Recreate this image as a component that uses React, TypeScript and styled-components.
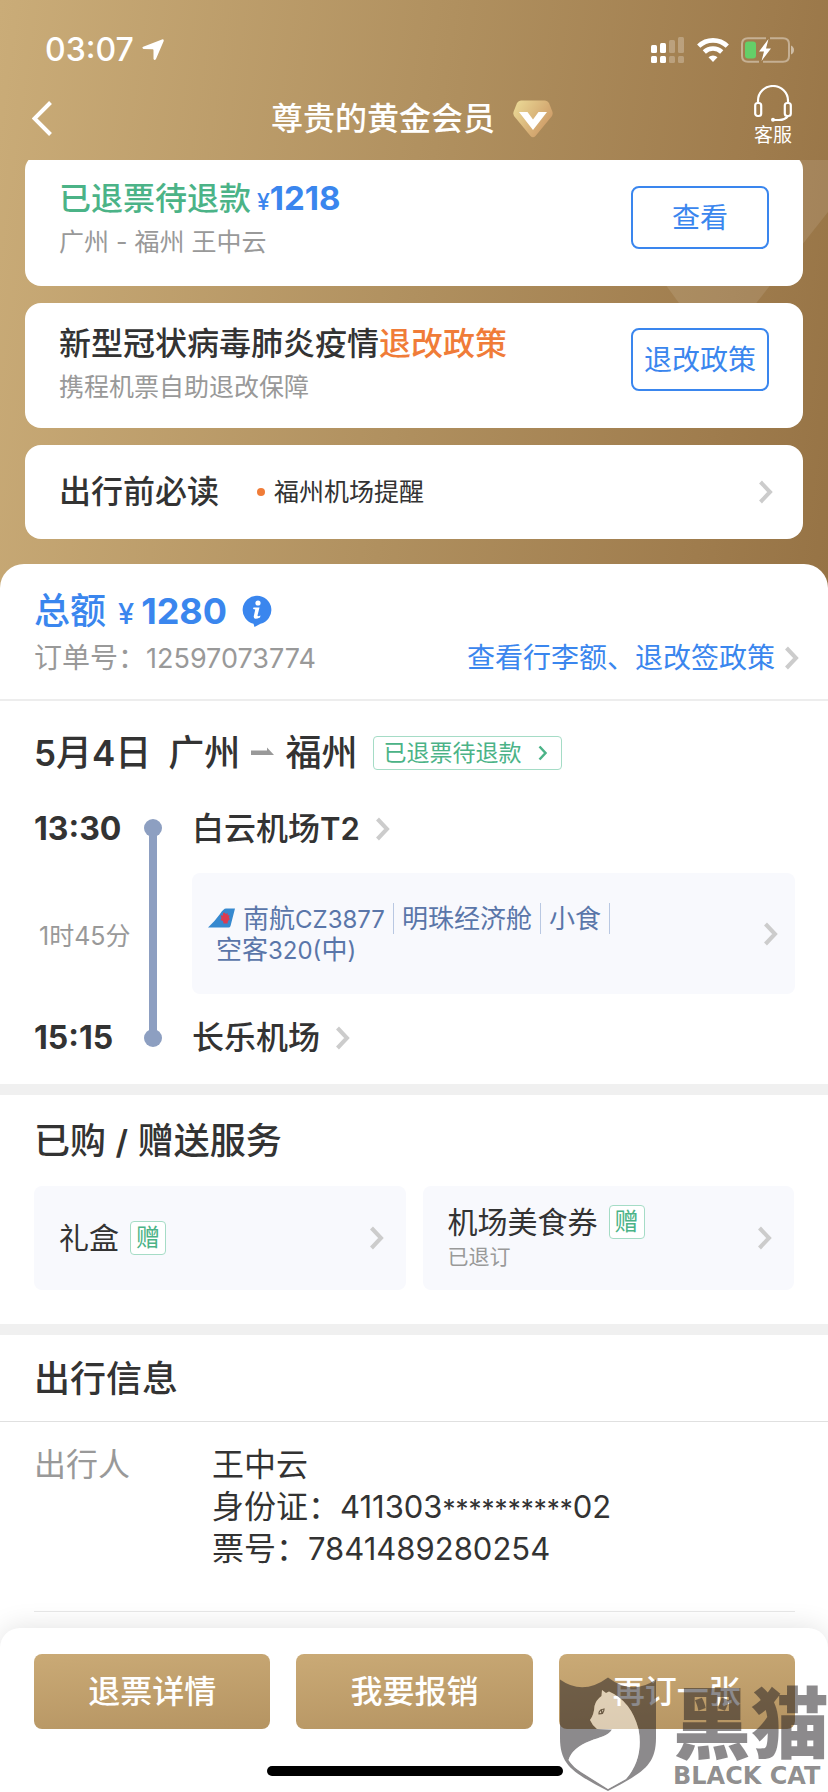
import styled, { createGlobalStyle, css } from 'styled-components';

const GlobalStyle = createGlobalStyle`
  *, *::before, *::after {
    box-sizing: border-box;
  }

  body {
    margin: 0;
    background: #fff;
    color: #333;
    font-family: Inter, 'Noto Sans CJK SC', sans-serif;
  }

  button {
    font-family: inherit;
    cursor: pointer;
  }

  h1, h2, h3, p, dl, dt, dd {
    margin: 0;
    font-weight: inherit;
  }

  b, small {
    line-height: 1;
  }

  svg {
    display: block;
    flex-shrink: 0;
  }
`;

const Page = styled.div`
  position: relative;
  display: flex;
  flex-direction: column;
  min-height: 100vh;
  overflow: hidden;
`;

const Hero = styled.div`
  background: linear-gradient(98deg, #caac78 0%, #b0905f 50%, #9f7c4d 85%, #967345 100%);
  margin-bottom: -26px;
  padding-bottom: 51px;
`;

const StatusBar = styled.div`
  display: flex;
  align-items: center;
  justify-content: space-between;
  height: 80px;
  padding: 20px 34px 0 45px;
  color: #fff;
`;

const Clock = styled.div`
  display: flex;
  align-items: center;
  gap: 8px;
  font-size: 32px;
  font-weight: 500;
  line-height: 40px;
`;

const StatusIcons = styled.div`
  display: flex;
  align-items: center;
  gap: 12px;
`;

const NavBar = styled.header`
  display: grid;
  grid-template-columns: 1fr auto 1fr;
  align-items: center;
  height: 80px;
  padding: 0 36px 2px 32px;
  color: #fff;
`;

const IconButton = styled.button`
  display: flex;
  flex-direction: column;
  align-items: center;
  padding: 0;
  border: 0;
  background: none;
  color: inherit;
  font-size: 19px;
  line-height: 24px;
`;

const BackButton = styled(IconButton)`
  justify-self: start;
`;

const ServiceButton = styled(IconButton)`
  justify-self: end;
  gap: 2px;
  padding-bottom: 6px;
`;

const NavTitle = styled.h1`
  display: flex;
  align-items: center;
  gap: 18px;
  font-size: 32px;
  font-weight: 500;
  line-height: 40px;
`;

const Notices = styled.div`
  position: relative;
  display: flex;
  flex-direction: column;
  gap: 17px;
  padding: 0 25px;
  overflow: hidden;
`;

const Facet = styled.svg`
  position: absolute;
  top: 0;
  right: 0;
`;

const Notice = styled.section<{ $height: number; $scrolled?: boolean; $link?: boolean }>`
  position: relative;
  display: flex;
  align-items: center;
  justify-content: space-between;
  min-height: ${({ $height }) => $height}px;
  margin-top: ${({ $scrolled }) => ($scrolled ? -6 : 0)}px;
  padding: 0 ${({ $link }) => ($link ? 29 : 34)}px 0 34px;
  border-radius: 16px;
  background: #fff;
`;

const NoticeTitle = styled.h2<{ $tone?: string }>`
  color: ${({ $tone }) => $tone ?? '#333'};
  font-size: 32px;
  font-weight: 500;
  line-height: 40px;
`;

const Highlight = styled.span`
  color: #f07c38;
`;

const Price = styled.span`
  margin-left: 6px;
  color: #3a86ee;
  font-size: 33px;
  font-weight: 700;
  line-height: 1;

  small {
    font-size: 23px;
    font-weight: 500;
  }
`;

const Muted = styled.p`
  margin-top: 3px;
  color: #999;
  font-size: 25px;
  line-height: 40px;
`;

const OutlineButton = styled.button`
  align-self: flex-end;
  width: 138px;
  height: 63px;
  margin-bottom: 37px;
  padding: 0 0 4px;
  border: 2px solid #3a86ee;
  border-radius: 8px;
  background: #fff;
  color: #3a86ee;
  font-size: 28px;
`;

const Reminder = styled.p`
  display: flex;
  flex: 1;
  align-items: center;
  gap: 9px;
  margin-left: 38px;
  font-size: 25px;
  line-height: 40px;

  &::before {
    content: '';
    width: 8px;
    height: 8px;
    border-radius: 50%;
    background: #f07c38;
  }
`;

const Sheet = styled.main`
  position: relative;
  flex: 1;
  border-radius: 24px 24px 0 0;
  background: #fff;
`;

const Summary = styled.section`
  height: 137px;
  padding: 24px 28px 0 34px;
  border-bottom: 2px solid #ededed;
`;

const Total = styled.h2`
  display: flex;
  align-items: center;
  color: #3a86ee;
  font-size: 36px;
  font-weight: 500;
  line-height: 46px;
`;

const TotalPrice = styled.span`
  margin: 0 15px 0 12px;
  font-size: 36px;
  font-weight: 700;

  small {
    margin-right: 7px;
    font-size: 29px;
    font-weight: 500;
  }
`;

const SummaryRow = styled.div`
  display: flex;
  align-items: center;
  justify-content: space-between;
  color: #999;
  font-size: 28px;
  line-height: 48px;
`;

const Digits = styled.span<{ $size: number }>`
  font-size: ${({ $size }) => $size}px;
  line-height: 1;
`;

const PolicyLink = styled.a`
  display: flex;
  align-items: center;
  gap: 9px;
  color: #3a86ee;
  text-decoration: none;
`;

const Trip = styled.section`
  padding: 29px 33px 23px 34px;
`;

const RouteTitle = styled.h2`
  display: flex;
  align-items: center;
  margin-bottom: 30px;
  font-size: 36px;
  font-weight: 500;
  line-height: 46px;
`;

const RouteDate = styled.span`
  margin-right: 17px;

  b {
    font-size: 35px;
    font-weight: 600;
  }
`;

const greenTag = css`
  display: flex;
  align-items: center;
  border: 1px solid #a5dcc6;
  border-radius: 4px;
  background: #fff;
  color: #4bb387;
`;

const StateTag = styled.a`
  ${greenTag}
  gap: 17px;
  height: 34px;
  margin-left: 16px;
  padding: 0 13px 0 9px;
  font-size: 23px;
  font-weight: 400;
  text-decoration: none;
`;

const Timeline = styled.div`
  display: grid;
  grid-template-columns: 110px 18px 1fr;
  grid-template-rows: 46px auto 46px;
`;

const Time = styled.time`
  font-size: 32px;
  font-weight: 700;
  line-height: 46px;
`;

const Duration = styled.span`
  align-self: center;
  padding: 4px 0 0 5px;
  color: #999;
  font-size: 25px;
  line-height: 40px;
`;

const Rail = styled.div`
  grid-column: 2;
  grid-row: 1 / 4;
  display: flex;
  flex-direction: column;
  align-items: center;
  padding: 13px 0 14px;

  &::before,
  &::after {
    content: '';
    width: 18px;
    height: 18px;
    border-radius: 50%;
    background: #8d9fc1;
  }
`;

const RailLine = styled.i`
  flex: 1;
  width: 8px;
  margin: -2px 0;
  background: #8d9fc1;
`;

const Airport = styled.h3`
  grid-column: 3;
  display: flex;
  align-items: center;
  gap: 15px;
  padding-left: 30px;
  font-size: 32px;
  font-weight: 500;
  line-height: 46px;

  b {
    font-size: 31px;
    font-weight: 600;
  }
`;

const FlightCard = styled.a`
  grid-column: 3;
  display: flex;
  align-items: center;
  justify-content: space-between;
  min-height: 121px;
  margin: 21px 0 21px 30px;
  padding: 0 16px;
  border-radius: 8px;
  background: #f8f9fd;
  color: #5a76a9;
  font-size: 26px;
  line-height: 31px;
  text-decoration: none;
`;

const FlightFacts = styled.span`
  display: flex;
  align-items: center;
`;

const Fact = styled.span`
  margin-right: 8px;
  padding-right: 8px;
  border-right: 1px solid #b9c8e2;
`;

const Aircraft = styled.span`
  display: block;
  padding-left: 8px;
`;

const Band = styled.hr`
  height: 11px;
  margin: 0;
  border: 0;
  background: #f0f0f0;
`;

const Section = styled.section`
  padding: 23px 34px 34px;
`;

const SectionTitle = styled.h2`
  font-size: 36px;
  font-weight: 500;
  line-height: 46px;

  b {
    font-size: 33px;
    font-weight: 600;
  }
`;

const Services = styled.div`
  display: grid;
  grid-template-columns: 1fr 1fr;
  gap: 17px;
  margin-top: 22px;
`;

const ServiceCard = styled.a`
  display: flex;
  align-items: center;
  justify-content: space-between;
  min-height: 104px;
  padding: 0 21px 0 25px;
  border-radius: 8px;
  background: #f8f9fd;
  color: #333;
  text-decoration: none;
`;

const ServiceName = styled.span`
  display: flex;
  align-items: center;
  gap: 11px;
  font-size: 30px;
  line-height: 38px;
`;

const GiftTag = styled.span`
  ${greenTag}
  justify-content: center;
  width: 36px;
  height: 34px;
  font-size: 24px;
`;

const ServiceNote = styled.span`
  display: block;
  color: #999;
  font-size: 21px;
  line-height: 32px;
`;

const InfoTitle = styled(SectionTitle)`
  height: 87px;
  padding: 21px 34px;
  border-bottom: 1px solid #e0e0e0;
`;

const Passenger = styled.dl`
  display: grid;
  grid-template-columns: 178px 1fr;
  margin: 0 33px 0 34px;
  padding: 22px 0 41px;
  border-bottom: 1px solid #e8e8e8;
  font-size: 32px;
  line-height: 42px;

  dt {
    color: #999;
  }
`;

const Footer = styled.footer`
  position: relative;
  margin-top: 15px;
  padding: 26px 33px 16px 34px;
  border-radius: 20px 20px 0 0;
  background: #fff;
  box-shadow: 0 0 28px rgba(0, 0, 0, 0.12);
`;

const Actions = styled.div`
  display: grid;
  grid-template-columns: repeat(3, 1fr);
  gap: 26px;
`;

const GoldButton = styled.button`
  height: 75px;
  padding: 0 0 5px;
  border: 0;
  border-radius: 8px;
  background: linear-gradient(175deg, #caaa76, #b59462);
  color: #fff;
  font-size: 32px;
  font-weight: 500;
`;

const HomeIndicator = styled.div`
  width: 296px;
  height: 10px;
  margin: 37px auto 0;
  border-radius: 5px;
  background: #000;
`;

const Watermark = styled.div`
  position: absolute;
  right: 1px;
  bottom: 0;
  display: flex;
  align-items: flex-end;
  gap: 16px;
  color: rgba(35, 31, 34, 0.52);
  pointer-events: none;
`;

const WatermarkText = styled.div`
  display: flex;
  flex-direction: column;
  gap: 6px;
  width: 154px;
  padding-bottom: 3px;
  white-space: nowrap;
`;

const WatermarkName = styled.span`
  font-family: 'Noto Sans CJK SC', sans-serif;
  font-size: 78px;
  font-weight: 900;
  line-height: 76px;
`;

const WatermarkLatin = styled.span`
  font-family: 'DejaVu Sans', sans-serif;
  font-size: 24px;
  font-weight: 700;
  line-height: 26px;
`;

function Chevron() {
  return (
    <svg width="16" height="26" viewBox="0 0 16 26" fill="none" stroke="#ccc" strokeWidth="4">
      <path d="M2.500 3L12 13L2.500 23" />
    </svg>
  );
}

function LocationArrow() {
  return (
    <svg width="22" height="22" viewBox="0 0 22 22" fill="#fff">
      <path d="M20 .4Q22 0 21.700 2L14 20Q12.600 22 11.500 20V11.200Q11.500 10.300 10.600 10.300L1.500 10Q-.6 9 1.200 7.800Z" />
    </svg>
  );
}

function SignalIcon() {
  return (
    <svg width="34" height="26" viewBox="0 0 34 26" fill="#fff">
      <rect x="0" y="8" width="6" height="8" rx="1.500" />
      <rect x="9" y="6" width="6" height="10" rx="1.500" />
      <rect x="0" y="19" width="6" height="7" rx="1.500" />
      <rect x="9" y="19" width="6" height="7" rx="1.500" />
      <g opacity=".25">
        <rect x="18" y="3" width="6" height="13" rx="1.500" />
        <rect x="27" y="0" width="6" height="16" rx="1.500" />
        <rect x="18" y="19" width="6" height="7" rx="1.500" />
        <rect x="27" y="19" width="6" height="7" rx="1.500" />
      </g>
    </svg>
  );
}

function WifiIcon() {
  return (
    <svg width="32" height="24" viewBox="0 0 32 24" fill="none" stroke="#fff" strokeWidth="4.600">
      <path d="M1.700 8.200A20.500 20.500 0 0 1 30.300 8.200" />
      <path d="M7.300 14A12.500 12.500 0 0 1 24.700 14" />
      <path d="M11.500 19.200A6.500 6.500 0 0 1 20.500 19.200L16 24Z" fill="#fff" stroke="none" />
    </svg>
  );
}

function BatteryIcon() {
  return (
    <svg width="53" height="26" viewBox="0 0 53 26">
      <path
        d="M25 1.200H7Q1 1.200 1 7V19Q1 24.800 7 24.800H18M29 1.200H42Q48 1.200 48 7V19Q48 24.800 42 24.800H22"
        fill="none"
        stroke="#fff"
        strokeOpacity=".4"
        strokeWidth="2"
      />
      <path d="M50 8.500Q53 10 53 13T50 17.500Z" fill="#fff" fillOpacity=".5" />
      <rect x="4" y="4.500" width="11" height="17" rx="3" fill="#65cf68" />
      <path d="M27.500 2L18 14.500H23L20.500 24L30 11.500H25Z" fill="#fff" />
    </svg>
  );
}

function BackIcon() {
  return (
    <svg width="20" height="36" viewBox="0 0 20 36" fill="none" stroke="#fff" strokeWidth="4">
      <path d="M18.500 1.500L2.500 17.500L18.500 33.500" />
    </svg>
  );
}

function GoldBadge() {
  return (
    <svg width="40" height="38" viewBox="0 0 40 38">
      <defs>
        <linearGradient id="badge" x1="0" y1="0" x2="1" y2=".6">
          <stop offset="0" stopColor="#ecdc98" />
          <stop offset="1" stopColor="#cd9a66" />
        </linearGradient>
      </defs>
      <path
        d="M8 .5H32Q34.500 .5 36 3L39.500 12Q40 14 39 16L22.500 36Q20 38.500 17.500 36L1 16Q0 14 .5 12L4 3Q5.500 .5 8 .5Z"
        fill="url(#badge)"
      />
      <path d="M6 12H14.500L20 19.500L25.500 12H34L20 30Z" fill="#fff" />
    </svg>
  );
}

function HeadsetIcon() {
  return (
    <svg width="38" height="37" viewBox="0 0 38 37" fill="none" stroke="#fff" strokeWidth="2.200">
      <path d="M4 18V15.500A15 14.500 0 0 1 34 15.500V18" />
      <rect x="1.200" y="18" width="6" height="13" rx="2.500" />
      <rect x="30.800" y="18" width="6" height="13" rx="2.500" />
      <path d="M34 31Q31 35 25 35H19" />
      <circle cx="19" cy="34.800" r="2" fill="#fff" stroke="none" />
    </svg>
  );
}

function InfoIcon() {
  return (
    <svg width="30" height="32" viewBox="0 0 30 32">
      <path d="M15 .8A14.200 14.200 0 0 1 18.500 28.800L12.500 32L11.500 28.800A14.200 14.200 0 0 1 15 .8Z" fill="#3a86ee" />
      <circle cx="16" cy="8" r="2.600" fill="#fff" />
      <path d="M11.500 12.500H17.500L15.500 20.500Q15.500 21.800 18.500 20.500L18 22.500Q11 25.500 11.800 21L13.300 14.500L11 14Z" fill="#fff" />
    </svg>
  );
}

function RouteArrow() {
  return (
    <svg width="45" height="12" viewBox="0 0 45 12" fill="#999">
      <path d="M11 3.500H27V.5L34 8H11Z" />
    </svg>
  );
}

function AirlineLogo() {
  return (
    <svg width="35" height="20" viewBox="0 0 35 20">
      <path d="M0 19.500Q7 13 12 6Q15.500 .5 18 .5H27L22.500 18Q22 19.500 20.500 19.500Z" fill="#3689cf" />
      <path
        d="M16.500 4.500L18 6L19.500 5L19.800 7.500L21.500 7L21 10L22 11L20 13L19.500 15.500H15.500L15 13L12.500 12L13.500 10L12.500 7.500L15 7.500L15 5Z"
        fill="#dc3b50"
      />
    </svg>
  );
}

function CatShield() {
  const cat =
    'M43 14L47 17L50 15.500Q72 25 79.500 53Q85 82 67 103L49 113L22 96Q14 91 9.500 84Q13 72 31 65C41 61 49 60 53 53.500L38 53Q33 49 31 44Q35 39 35.500 30Q37 24 42.500 20Z';
  return (
    <svg width="98" height="116" viewBox="0 0 98 116">
      <path
        d={`M1 3.500Q24 20 49 1.500Q73 20 97 3.500V62C97 90 83 97 49 115C15 97 1 90 1 62Z${cat}`}
        fill="currentColor"
        fillRule="evenodd"
      />
      <path d={cat} fill="#fff" fillOpacity=".5" />
      <path d="M40 38Q39.500 34 45 33Q45 38 40 38Z" fill="none" stroke="#6b5a44" strokeWidth="1.200" />
      <path d="M42 33.500L43.500 38" stroke="#6b5a44" strokeWidth="1.500" />
    </svg>
  );
}

const services = [
  { name: '礼盒', note: '' },
  { name: '机场美食券', note: '已退订' },
];

const actions = ['退票详情', '我要报销', '再订一张'];

export default function App() {
  return (
    <Page>
      <GlobalStyle />
      <Hero>
        <StatusBar>
          <Clock>
            03:07
            <LocationArrow />
          </Clock>
          <StatusIcons>
            <SignalIcon />
            <WifiIcon />
            <BatteryIcon />
          </StatusIcons>
        </StatusBar>
        <NavBar>
          <BackButton aria-label="返回">
            <BackIcon />
          </BackButton>
          <NavTitle>
            尊贵的黄金会员
            <GoldBadge />
          </NavTitle>
          <ServiceButton>
            <HeadsetIcon />
            客服
          </ServiceButton>
        </NavBar>
        <Notices>
          <Facet width="260" height="200" viewBox="0 0 260 200" fill="#fff" fillOpacity=".1">
            <path d="M7 0H260V52L148 194Z" />
          </Facet>
          <Notice $height={132} $scrolled>
            <div>
              <NoticeTitle $tone="#4bb387">
                已退票待退款
                <Price>
                  <small>¥</small>1218
                </Price>
              </NoticeTitle>
              <Muted>广州 - 福州 王中云</Muted>
            </div>
            <OutlineButton>查看</OutlineButton>
          </Notice>
          <Notice $height={125}>
            <div>
              <NoticeTitle>
                新型冠状病毒肺炎疫情<Highlight>退改政策</Highlight>
              </NoticeTitle>
              <Muted>携程机票自助退改保障</Muted>
            </div>
            <OutlineButton>退改政策</OutlineButton>
          </Notice>
          <Notice $height={94} $link>
            <NoticeTitle>出行前必读</NoticeTitle>
            <Reminder>福州机场提醒</Reminder>
            <Chevron />
          </Notice>
        </Notices>
      </Hero>

      <Sheet>
        <Summary>
          <Total>
            总额
            <TotalPrice>
              <small>¥</small>1280
            </TotalPrice>
            <InfoIcon />
          </Total>
          <SummaryRow>
            <span>
              订单号：<Digits $size={27}>12597073774</Digits>
            </span>
            <PolicyLink href="#policy">
              查看行李额、退改签政策
              <Chevron />
            </PolicyLink>
          </SummaryRow>
        </Summary>

        <Trip>
          <RouteTitle>
            <RouteDate>
              <b>5</b>月<b>4</b>日
            </RouteDate>
            广州
            <RouteArrow />
            福州
            <StateTag href="#refund">
              已退票待退款
              <svg width="10" height="16" viewBox="0 0 10 16" fill="none" stroke="#4bb387" strokeWidth="2.500">
                <path d="M1.500 1.500L7.500 8L1.500 14.500" />
              </svg>
            </StateTag>
          </RouteTitle>
          <Timeline>
            <Time>13:30</Time>
            <Rail>
              <RailLine />
            </Rail>
            <Airport>
              <span>
                白云机场<b>T2</b>
              </span>
              <Chevron />
            </Airport>
            <Duration>1时45分</Duration>
            <FlightCard href="#flight">
              <span>
                <FlightFacts>
                  <AirlineLogo />
                  <Fact>
                    南航<Digits $size={24}>CZ3877</Digits>
                  </Fact>
                  <Fact>明珠经济舱</Fact>
                  <Fact>小食</Fact>
                </FlightFacts>
                <Aircraft>
                  空客<Digits $size={24}>320(</Digits>中<Digits $size={24}>)</Digits>
                </Aircraft>
              </span>
              <Chevron />
            </FlightCard>
            <Time>15:15</Time>
            <Airport>
              长乐机场
              <Chevron />
            </Airport>
          </Timeline>
        </Trip>

        <Band />
        <Section>
          <SectionTitle>
            已购 <b>/</b> 赠送服务
          </SectionTitle>
          <Services>
            {services.map(({ name, note }) => (
              <ServiceCard key={name} href="#service">
                <span>
                  <ServiceName>
                    {name}
                    <GiftTag>赠</GiftTag>
                  </ServiceName>
                  {note && <ServiceNote>{note}</ServiceNote>}
                </span>
                <Chevron />
              </ServiceCard>
            ))}
          </Services>
        </Section>

        <Band />
        <InfoTitle>出行信息</InfoTitle>
        <Passenger>
          <dt>出行人</dt>
          <dd>
            <p>王中云</p>
            <p>
              身份证：<Digits $size={31}>411303</Digits>
              <Digits $size={26}>**********</Digits>
              <Digits $size={31}>02</Digits>
            </p>
            <p>
              票号：<Digits $size={31}>7841489280254</Digits>
            </p>
          </dd>
        </Passenger>
      </Sheet>

      <Footer>
        <Actions>
          {actions.map((label) => (
            <GoldButton key={label}>{label}</GoldButton>
          ))}
        </Actions>
        <HomeIndicator />
      </Footer>

      <Watermark>
        <CatShield />
        <WatermarkText>
          <WatermarkName>黑猫</WatermarkName>
          <WatermarkLatin>BLACK CAT</WatermarkLatin>
        </WatermarkText>
      </Watermark>
    </Page>
  );
}
